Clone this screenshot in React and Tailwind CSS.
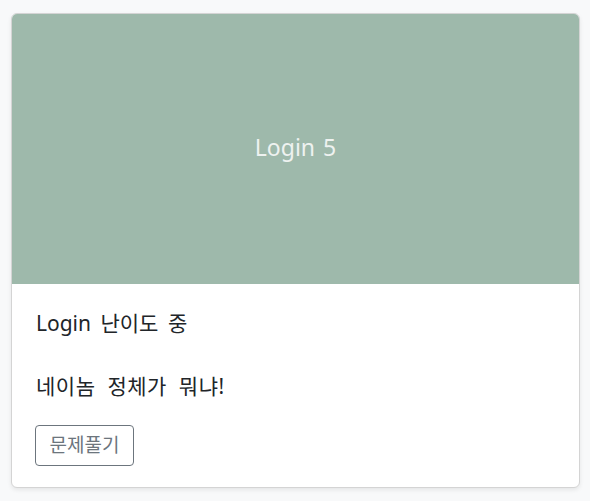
export default function App() {
  return (
    <div className="min-h-[501px] w-[590px] bg-[#f8f9fa] pt-[13px] pl-[11px]" style={{ fontFamily: '"Noto Sans", "Noto Sans CJK KR", sans-serif' }}>
      <div className="w-[569px] overflow-hidden rounded-[6px] border border-[#d4d4d4] bg-white shadow-[0_2px_4px_rgba(0,0,0,0.08)]">
        <div className="flex h-[270px] items-center justify-center bg-[#9eb9ab] pb-[4px]">
          <span className="text-[23px] text-[#eef2f0] [word-spacing:2px]">Login 5</span>
        </div>
        <div className="px-[23px] pt-[24px] pb-[21px] text-[#212529]">
          <div className="pl-[1px] text-[21px] leading-[30px] [word-spacing:4px]">Login 난이도 중</div>
          <div className="mt-[33px] pl-[1px] text-[21px] leading-[30px] tracking-[0.5px] [word-spacing:6px]">네이놈 정체가 뭐냐!</div>
          <button className="mt-[24px] flex h-[41px] w-[99px] items-center justify-center rounded-[4px] border border-[#6c757d] text-[19px] text-[#6c757d]">문제풀기</button>
        </div>
      </div>
    </div>
  );
}
